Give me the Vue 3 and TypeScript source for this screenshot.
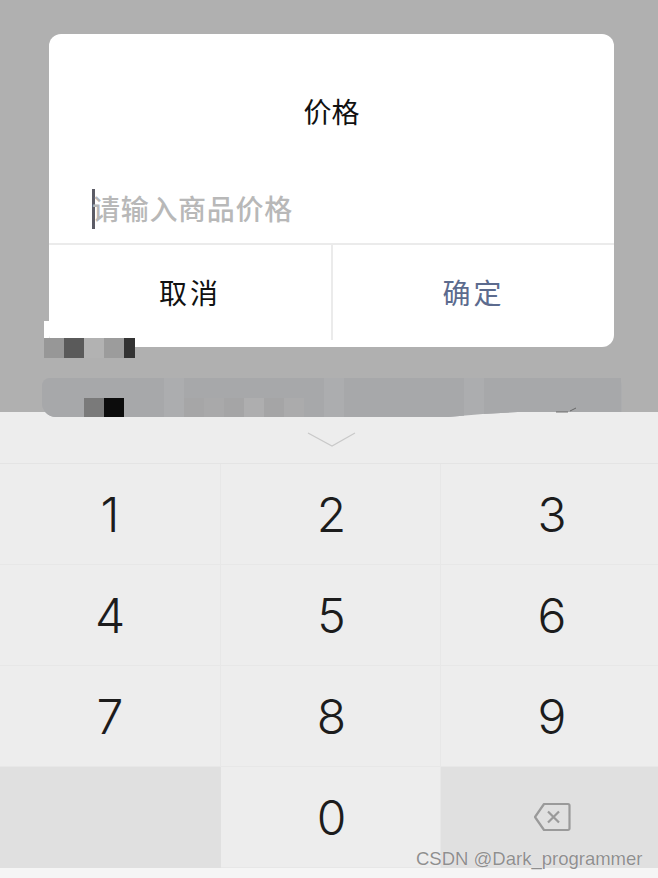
<script setup lang="ts">
const rows: string[][] = [
  ['1', '2', '3'],
  ['4', '5', '6'],
  ['7', '8', '9'],
]
const mosaicTop = ['#979797', '#5a5a5a', '#b2b2b2', '#9c9c9c', '#333333']
const cardWidths = [122, 140, 120, 137]
const tiles = ['#a6a6a7', '#a9a9aa', '#a5a5a6', '#aeaeaf', '#a5a5a6', '#ababac']
</script>

<template>
  <div class="page">
    <div class="dialog">
      <div class="title">价格</div>
      <div class="field"><span class="caret"></span><span class="placeholder">请输入商品价格</span></div>
      <div class="actions">
        <div class="btn cancel">取消</div>
        <div class="btn ok">确定</div>
      </div>
    </div>

    <div class="keyboard">
      <div class="handle">
        <svg width="50" height="16" viewBox="0 0 50 16">
          <path d="M1 1 L25 14 L48 1" fill="none" stroke="#c9c9c9" stroke-width="1.2" />
        </svg>
      </div>
      <div v-for="(row, r) in rows" :key="r" class="row">
        <div v-for="k in row" :key="k" class="key">{{ k }}</div>
      </div>
      <div class="row">
        <div class="key blank"></div>
        <div class="key">0</div>
        <div class="key blank">
          <svg width="38" height="30" viewBox="0 0 38 30">
            <path d="M11 2 H35 a1.500 1.500 0 0 1 1.500 1.500 V26.500 a1.500 1.500 0 0 1 -1.500 1.500 H11 L2 15 Z" fill="none" stroke="#9a9a9a" stroke-width="2.200" stroke-linejoin="round" />
            <path d="M15 9.500 L26 20.500 M26 9.500 L15 20.500" fill="none" stroke="#9a9a9a" stroke-width="2.200" />
          </svg>
        </div>
      </div>
      <div class="strip"></div>
    </div>

    <div class="cards">
      <div v-for="(w, i) in cardWidths" :key="i" class="card" :style="{ width: w + 'px' }">
        <div v-if="i === 1" class="tiles">
          <i v-for="(c, t) in tiles" :key="t" :style="{ background: c }"></i>
        </div>
      </div>
    </div>
    <div class="mosaic-a">
      <i v-for="(c, i) in mosaicTop" :key="i" :style="{ background: c }"></i>
    </div>
    <div class="white-patch"></div>
    <div class="mosaic-b"><i></i><i></i></div>
    <svg class="flick" width="22" height="6" viewBox="0 0 22 6">
      <path d="M0 5 L12 5 M14 4 L20 1" fill="none" stroke="#555" stroke-width="0.8" />
    </svg>

    <div class="watermark">CSDN @Dark_programmer</div>
  </div>
</template>

<style>
html, body { margin: 0; background: #b0b0b0; }
</style>

<style scoped>
.page {
  position: relative;
  width: 658px;
  height: 878px;
  overflow: hidden;
  background: #b0b0b0;
  display: flex;
  flex-direction: column;
  font-family: "Noto Sans CJK SC", "Noto Sans", sans-serif;
}
.dialog {
  position: relative;
  box-sizing: border-box;
  width: 565px;
  height: 313px;
  margin: 34px 0 0 49px;
  background: #fff;
  border-radius: 12px;
  display: flex;
  flex-direction: column;
}
.title {
  height: 115px;
  padding-top: 38px;
  box-sizing: border-box;
  display: flex;
  align-items: center;
  justify-content: center;
  font-size: 28px;
  color: #111;
}
.field {
  height: 96px;
  box-sizing: border-box;
  padding: 40px 0 0 43px;
  display: flex;
  align-items: flex-start;
  border-bottom: 2px solid #ebebeb;
}
.caret {
  width: 3px;
  height: 40px;
  background: #5c5c66;
  flex: none;
}
.placeholder {
  font-size: 28px;
  font-weight: 500;
  line-height: 38px;
  letter-spacing: 0.7px;
  color: #b8b8b8;
  margin-left: -3px;
}
.actions {
  flex: 1;
  display: flex;
  padding-bottom: 7px;
}
.btn {
  display: flex;
  align-items: center;
  justify-content: center;
  font-size: 28px;
  letter-spacing: 3px;
  padding-bottom: 2px;
  box-sizing: border-box;
}
.cancel {
  flex: none;
  width: 284px;
  color: #111;
  border-right: 2px solid #ebebeb;
}
.ok { flex: 1; color: #5c6b8e; }

.cards {
  position: absolute;
  left: 42px;
  top: 378px;
  width: 580px;
  height: 39px;
  display: flex;
  gap: 20px;
  background: #acadaf;
  border-radius: 8px 8px 0 14px;
  clip-path: polygon(0 0, 100% 0, 100% 34px, 82% 34px, 76% 36px, 70% 39px, 0 39px);
}
.card {
  background: #a7a8aa;
  position: relative;
}
.card:first-child { border-radius: 8px 0 0 14px; }
.tiles {
  position: absolute;
  left: 0;
  top: 20px;
  display: flex;
}
.tiles i { display: block; width: 20px; height: 19px; }
.mosaic-a {
  position: absolute;
  left: 44px;
  top: 338px;
  display: flex;
}
.mosaic-a i { display: block; width: 20px; height: 20px; }
.mosaic-a i:last-child { width: 11px; }
.white-patch {
  position: absolute;
  left: 44px;
  top: 321px;
  width: 5px;
  height: 17px;
  background: #fff;
}
.mosaic-b {
  position: absolute;
  left: 84px;
  top: 398px;
  display: flex;
}
.mosaic-b i { display: block; width: 20px; height: 19px; background: #7a7a7a; }
.mosaic-b i:last-child { background: #0c0c0c; }
.flick {
  position: absolute;
  left: 556px;
  top: 407px;
}

.keyboard {
  position: absolute;
  left: 0;
  right: 0;
  top: 412px;
  bottom: 0;
  background: #ededed;
  display: flex;
  flex-direction: column;
}
.handle {
  height: 52px;
  box-sizing: border-box;
  border-bottom: 1px solid #e4e4e4;
  display: flex;
  justify-content: center;
  padding: 20px 0 0 5px;
}
.row {
  display: grid;
  grid-template-columns: 221px 220px 217px;
  height: 101px;
}
.key {
  display: flex;
  align-items: center;
  justify-content: center;
  font-family: Inter, "Noto Sans", sans-serif;
  font-size: 48px;
  font-weight: 300;
  color: #1c1c1c;
  border-right: 1px solid #e7e7e7;
  border-bottom: 1px solid #e7e7e7;
  box-sizing: border-box;
}
.key:nth-child(2) { padding-left: 2px; }
.key:last-child { border-right: none; padding-left: 5px; }
.blank {
  background: #e0e0e0;
  border-color: #e0e0e0;
}
.strip {
  flex: 1;
  background: #f5f5f5;
}
.watermark {
  position: absolute;
  left: 416px;
  top: 847px;
  font-family: "Liberation Sans", sans-serif;
  font-size: 18.500px;
  line-height: 24px;
  color: #8f8f8f;
  text-shadow: 0 0 1px #fff;
}
</style>
